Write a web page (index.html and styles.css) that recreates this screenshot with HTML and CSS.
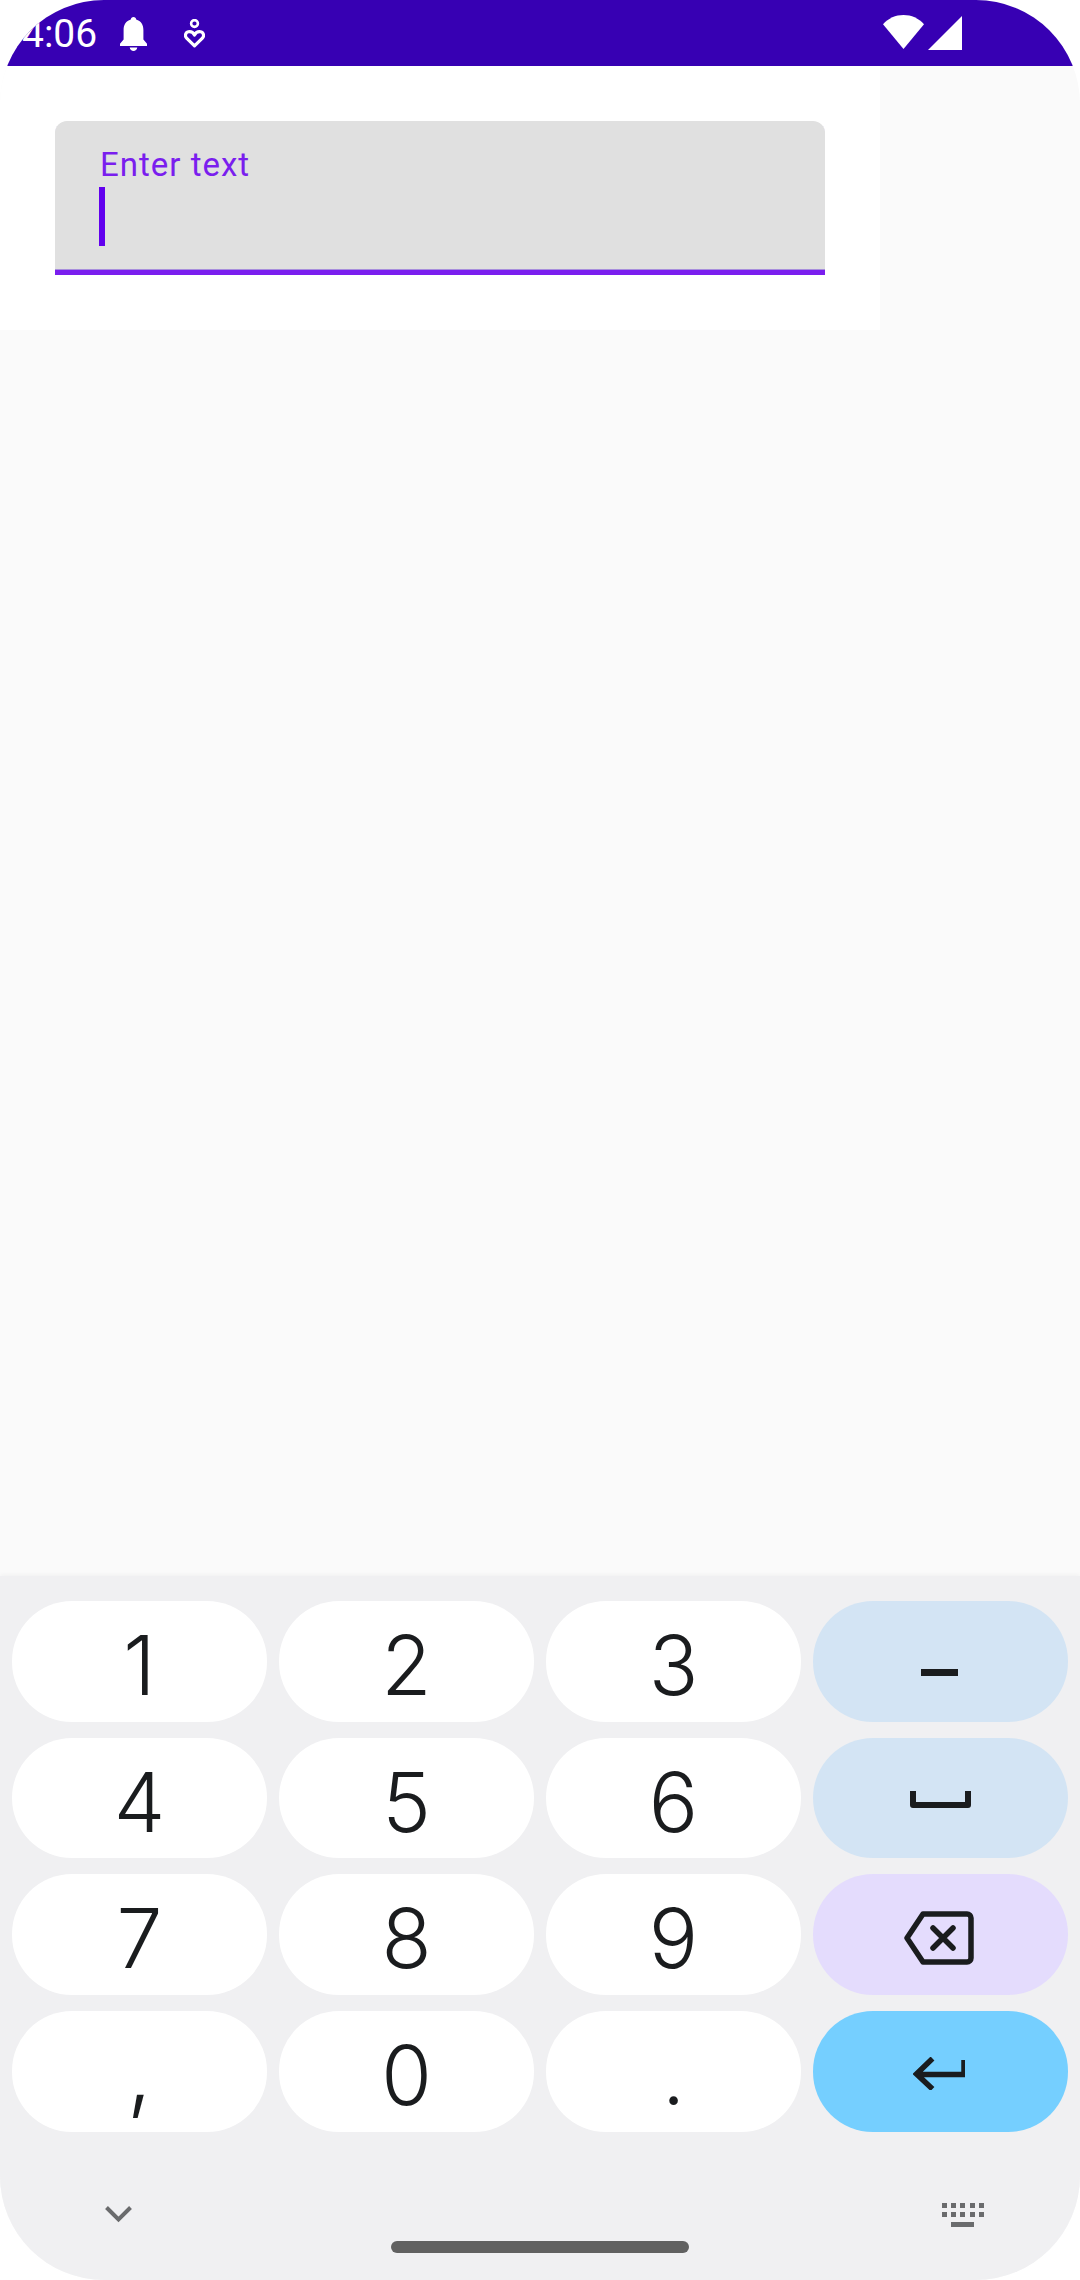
FILE: index.html
```html
<!DOCTYPE html>
<html lang="en">

<head>
    <meta charset="UTF-8" />
    <meta name="viewport" content="width=device-width, initial-scale=1" />
    <title>Enter text</title>
    <link rel="stylesheet" href="styles.css">
</head>

<body>
    <div class="screen">
        <div class="status-bar">
            <span class="clock">4:06</span>
            <svg class="icon-bell" viewBox="0 0 27 34">
                <path fill="#fff" d="M13.5 0c1.5 0 2.6 1.1 2.7 2.6C21 4 23.4 8 23.4 13v9.6L27 26.8V29H0v-2.200l3.600-4.200V13c0-5 2.400-9 7.200-10.400C10.900 1.100 12 0 13.500 0zM9.700 30.500h7.600c-.3 2-1.900 3.500-3.800 3.500s-3.500-1.500-3.800-3.500z" />
            </svg>
            <svg class="icon-care" viewBox="0 0 21 29">
                <circle cx="10.500" cy="4.500" r="3.400" fill="none" stroke="#fff" stroke-width="2.600" />
                <path fill="none" stroke="#fff" stroke-width="3.200" stroke-linejoin="round" d="M10.500 26.800 2.600 19.200c-2-2-1.300-5.800 1.700-6.400 2.600-.5 4.900.8 6.200 3.200 1.300-2.400 3.600-3.700 6.200-3.200 3 .6 3.700 4.400 1.700 6.400z" />
            </svg>
            <span class="status-right">
                <svg class="icon-wifi" viewBox="0 0 41 34">
                    <path fill="#fff" d="M20.500 34 0 9.200C5.500 3.200 12.500 0 20.500 0s15 3.200 20.500 9.200z" />
                </svg>
                <svg class="icon-signal" viewBox="0 0 34 34">
                    <path fill="#fff" d="M34 0v34H0z" />
                </svg>
            </span>
        </div>

        <div class="content">
            <div class="form-panel">
                <div class="text-field">
                    <label class="field-label">Enter text</label>
                    <div class="cursor"></div>
                </div>
            </div>
        </div>

        <div class="keyboard">
            <div class="keys">
                <button class="key">1</button>
                <button class="key">2</button>
                <button class="key">3</button>
                <button class="key key-side">
                    <svg class="icon-dash" viewBox="0 0 37 7"><rect width="37" height="7" fill="#1a1c1e" /></svg>
                </button>
                <button class="key">4</button>
                <button class="key">5</button>
                <button class="key">6</button>
                <button class="key key-side">
                    <svg class="icon-space" viewBox="0 0 61 17">
                        <path fill="none" stroke="#1a1c1e" stroke-width="6" stroke-linejoin="round" d="M3 0v14h55V0" />
                    </svg>
                </button>
                <button class="key">7</button>
                <button class="key">8</button>
                <button class="key">9</button>
                <button class="key key-delete">
                    <svg class="icon-backspace" viewBox="0 0 70 54">
                        <path fill="none" stroke="#1a1c1e" stroke-width="5.500" stroke-linejoin="round" d="M19 3h44c2.200 0 4 1.800 4 4v40c0 2.200-1.800 4-4 4H19L3 27z" />
                        <path fill="none" stroke="#1a1c1e" stroke-width="5.500" stroke-linecap="round" d="M29 17l20 20M49 17 29 37" />
                    </svg>
                </button>
                <button class="key key-comma">,</button>
                <button class="key">0</button>
                <button class="key">.</button>
                <button class="key key-enter">
                    <svg class="icon-enter" viewBox="0 0 52 33">
                        <path fill="none" stroke="#1a1c1e" stroke-width="5.500" d="M51 3v14.500H5M19.500 1.500 3.500 17l16 15" />
                    </svg>
                </button>
            </div>

            <div class="nav-row">
                <svg class="icon-chevron" viewBox="0 0 27 17">
                    <path fill="none" stroke="#6a6b6d" stroke-width="4" d="M1.500 1.500l12 12 12-12" />
                </svg>
                <div class="home-pill"></div>
                <svg class="icon-keys" viewBox="0 0 42 24" fill="#6a6b6d">
                    <rect x="0" y="0" width="5" height="5" /><rect x="9" y="0" width="5" height="5" /><rect x="18" y="0" width="5" height="5" /><rect x="28" y="0" width="5" height="5" /><rect x="37" y="0" width="5" height="5" />
                    <rect x="0" y="9" width="5" height="5" /><rect x="9" y="9" width="5" height="5" /><rect x="18" y="9" width="5" height="5" /><rect x="28" y="9" width="5" height="5" /><rect x="37" y="9" width="5" height="5" />
                    <rect x="9" y="19" width="23" height="5" />
                </svg>
            </div>
        </div>
    </div>
</body>

</html>
```

FILE: styles.css
```css
html,
body {
    margin: 0;
    background: #fff;
}

.screen {
    width: 1080px;
    height: 2280px;
    display: flex;
    flex-direction: column;
    background: #fafafa;
    border-radius: 104px;
    overflow: hidden;
}

/* status bar */
.status-bar {
    height: 66px;
    flex-shrink: 0;
    display: flex;
    align-items: flex-start;
    background: #3700b3;
    padding-left: 22px;
    box-sizing: border-box;
}

.clock {
    width: 98px;
    margin-top: 11px;
    font-family: Roboto, sans-serif;
    font-size: 39px;
    line-height: 46px;
    color: #fff;
}

.icon-bell {
    width: 27px;
    height: 34px;
    margin-top: 17px;
}

.icon-care {
    width: 21px;
    height: 29px;
    margin-top: 19px;
    margin-left: 37px;
}

.status-right {
    display: flex;
    gap: 4px;
    margin-left: auto;
    margin-right: 118px;
    margin-top: 15px;
}

.icon-wifi {
    width: 41px;
    height: 34px;
}

.icon-signal {
    width: 34px;
    height: 34px;
    margin-top: 1px;
}

/* app content */
.content {
    flex: 1;
}

.form-panel {
    width: 880px;
    box-sizing: border-box;
    padding: 55px;
    background: #fff;
}

.text-field {
    height: 154px;
    box-sizing: border-box;
    padding: 28px 0 0 44px;
    background: #e0e0e0;
    border-radius: 12px 12px 0 0;
    border-bottom: 5px solid #7a1eee;
    box-shadow: inset 0 -1px 0 #a88fdc;
}

.field-label {
    display: block;
    margin-left: 1px;
    font-family: Roboto, sans-serif;
    font-size: 33px;
    line-height: 32px;
    letter-spacing: 1px;
    color: #7a1eee;
}

.cursor {
    width: 6px;
    height: 59px;
    margin-top: 6px;
    background: #6200ee;
}

/* keyboard */
.keyboard {
    height: 704px;
    flex-shrink: 0;
    box-sizing: border-box;
    padding-top: 25px;
    background: #f0f0f2;
    box-shadow: 0 -2px 4px rgba(0, 0, 0, 0.03);
}

.keys {
    display: grid;
    grid-template-columns: repeat(4, 255px);
    grid-auto-rows: 120.7px;
    gap: 16px 12px;
    padding: 0 12px;
}

.key {
    display: block;
    padding: 0;
    border: none;
    border-radius: 60px;
    background: #fff;
    font-family: Inter, sans-serif;
    font-weight: 350;
    font-size: 82px;
    line-height: 130px;
    color: #1a1c1e;
}

.key-side {
    background: #d3e4f4;
}

.key-delete {
    background: #e4dcfd;
}

.key-enter {
    background: #75cfff;
}

.key-comma {
    font-size: 90px;
    line-height: 118px;
}

.key svg {
    display: block;
}

.icon-dash {
    width: 37px;
    height: 7px;
    margin: 22px 110px 0 108px;
}

.icon-space {
    width: 61px;
    height: 17px;
    margin: 3px auto 0;
}

.icon-backspace {
    width: 70px;
    height: 54px;
    margin: 6px 94px 0 91px;
}

.icon-enter {
    width: 52px;
    height: 33px;
    margin: 4px 103px 0 100px;
}

.nav-row {
    display: grid;
    grid-template-columns: 1fr 297px 1fr;
    align-items: start;
}

.icon-chevron {
    width: 27px;
    height: 17px;
    margin: 74px 0 0 105px;
}

.home-pill {
    height: 12px;
    margin-top: 109px;
    margin-left: -1px;
    border-radius: 6px;
    background: #616161;
}

.icon-keys {
    width: 42px;
    height: 24px;
    margin-top: 71px;
    margin-right: 96px;
    justify-self: end;
}
```
